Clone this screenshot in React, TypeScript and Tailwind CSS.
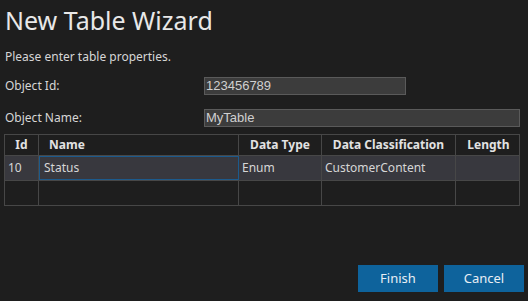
import React from "react";

const font = { fontFamily: '"Noto Sans", "Open Sans", sans-serif' };

function Field(props: { label: string; value: string; wide?: boolean }) {
  return (
    <div className="flex items-center h-[18px]">
      <div className="w-[199px] text-[12px] text-[#d6d6d6]">{props.label}</div>
      <div
        className={
          "h-[18px] bg-[#3c3c3c] border border-[#5a5a5a] pl-[1px] flex items-center text-[13px] text-[#d0d0d0] font-['Liberation_Sans',Arial,sans-serif] " +
          (props.wide ? "w-[316px]" : "w-[202px]")
        }
      >
        {props.value}
      </div>
    </div>
  );
}

export default function App() {
  const cols = "grid grid-cols-[34px_200px_83px_134px_65px]";
  return (
    <div style={font} className="w-[528px] h-[301px] bg-[#1e1e1e] text-[#d6d6d6] flex flex-col pl-[4px] overflow-hidden">
      <div className="pl-[1px] pt-[4px] text-[25px] leading-[32px] text-[#e8e8e8]">New Table Wizard</div>
      <div className="pl-[1px] mt-[13px] text-[12px] leading-[16px]">Please enter table properties.</div>
      <div className="mt-[12px] pl-[1px] flex flex-col gap-[14px]">
        <Field label="Object Id:" value="123456789" />
        <Field label="Object Name:" value="MyTable" wide />
      </div>
      <div className="mt-[7px] w-[516px] border border-[#474747] text-[12px]">
        <div className={cols + " h-[21px] items-center font-bold text-[#e2e2e2] border-b border-[#474747]"}>
          <div className="text-center border-r border-[#474747] h-full flex items-center justify-center">Id</div>
          <div className="pl-[10px] border-r border-[#474747] h-full flex items-center">Name</div>
          <div className="text-center border-r border-[#474747] h-full flex items-center justify-center">Data Type</div>
          <div className="text-center border-r border-[#474747] h-full flex items-center justify-center">Data Classification</div>
          <div className="text-center h-full flex items-center justify-center">Length</div>
        </div>
        <div className={cols + " h-[25px] bg-[#38383e] border-b border-[#474747]"}>
          <div className="pl-[3px] border-r border-[#474747] flex items-center">10</div>
          <div className="pl-[4px] border border-[#1c5a8c] flex items-center">Status</div>
          <div className="pl-[3px] border-r border-[#474747] flex items-center">Enum</div>
          <div className="pl-[3px] border-r border-[#474747] flex items-center">CustomerContent</div>
          <div />
        </div>
        <div className={cols + " h-[24px]"}>
          <div className="border-r border-[#474747]" />
          <div className="border-r border-[#474747]" />
          <div className="border-r border-[#474747]" />
          <div className="border-r border-[#474747]" />
          <div />
        </div>
      </div>
      <div className="mt-auto mb-[9px] flex justify-end gap-[6px] pr-[4px]">
        <button className="w-[80px] h-[27px] bg-[#0e639c] text-[13px] text-[#e8eef4]">Finish</button>
        <button className="w-[80px] h-[27px] bg-[#0e639c] text-[13px] text-[#e8eef4]">Cancel</button>
      </div>
    </div>
  );
}
